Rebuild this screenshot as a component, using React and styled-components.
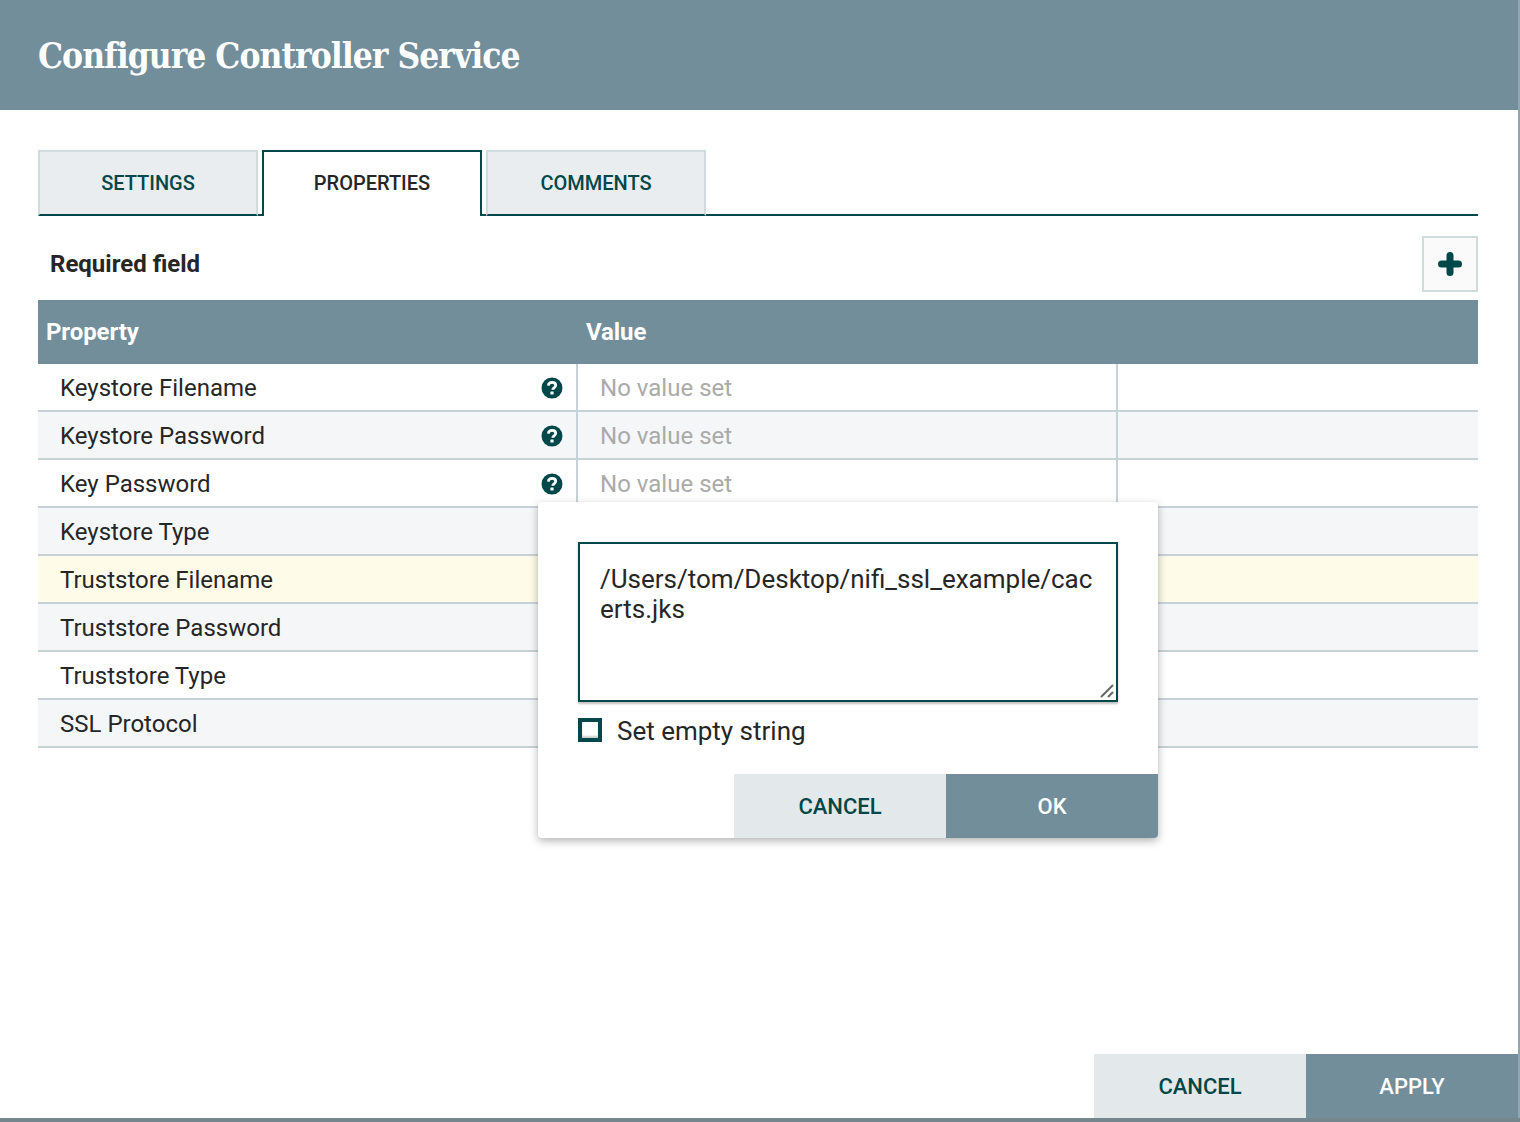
import styled, { createGlobalStyle } from "styled-components";

const GlobalStyle = createGlobalStyle`
  html, body {
    margin: 0;
    padding: 0;
    height: 100%;
    background: #92a5af;
    font-family: Roboto, "Liberation Sans", sans-serif;
    overflow: hidden;
  }
`;

// Dialog shell
const Dialog = styled.div`
  position: relative;
  width: 1518px;
  height: 1118px;
  background: #fff;
  display: flex;
  flex-direction: column;
`;

const BottomStrip = styled.div`
  height: 4px;
  background: #75868e;
`;

const Header = styled.div`
  height: 110px;
  flex: none;
  background: #728e9b;
  display: flex;
  align-items: center;
  padding-left: 38px;
  color: #fff;
  font-family: "DejaVu Serif Condensed", "DejaVu Serif", serif;
  font-size: 35px;
  font-weight: 700;
  letter-spacing: -0.96px;
`;

const Body = styled.div`
  flex: 1;
  padding: 40px 40px 0 38px;
  display: flex;
  flex-direction: column;
`;

// Tabs
const TabBar = styled.div`
  display: flex;
  gap: 4px;
  height: 66px;
  flex: none;
  border-bottom: 2px solid #004849;
  box-sizing: border-box;
`;

const Tab = styled.div`
  width: 220px;
  height: 66px;
  box-sizing: border-box;
  display: flex;
  align-items: center;
  justify-content: center;
  font-size: 20px;
  font-weight: 500;
  background: ${(props) => (props.$active ? "#fff" : "#e9edf0")};
  color: ${(props) => (props.$active ? "#262626" : "#004849")};
  border: 2px solid ${(props) => (props.$active ? "#004849" : "#cfdbdd")};
  border-bottom: ${(props) => (props.$active ? "none" : "2px solid #004849")};
  padding-bottom: ${(props) => (props.$active ? "2px" : "0")};
`;

const Toolbar = styled.div`
  height: 84px;
  flex: none;
  display: flex;
  align-items: center;
  justify-content: space-between;
  padding: 12px 0 0 12px;
  box-sizing: border-box;
`;

const RequiredLabel = styled.div`
  font-size: 24px;
  font-weight: 700;
  color: #262626;
`;

const AddButton = styled.div`
  width: 56px;
  height: 56px;
  box-sizing: border-box;
  background: #fafafa;
  border: 2px solid #cfdbdd;
  display: flex;
  align-items: center;
  justify-content: center;
`;

// Table
const TableHead = styled.div`
  height: 64px;
  background: #728e9b;
  display: grid;
  grid-template-columns: 540px 1fr;
  align-items: center;
  color: #fff;
  font-size: 24px;
  font-weight: 700;
  letter-spacing: -0.1px;
`;

const HeadCell = styled.div`
  padding-left: 8px;
`;

const Row = styled.div`
  height: 48px;
  box-sizing: border-box;
  display: grid;
  grid-template-columns: 538px 542px 1fr;
  border-bottom: 2px solid #c7d2d7;
  background: ${(props) =>
    props.$highlight ? "#fffbe9" : props.$odd ? "#f4f6f7" : "#fff"};
`;

const NameCell = styled.div`
  display: flex;
  align-items: center;
  justify-content: space-between;
  padding: 2px 13px 0 22px;
  font-size: 24px;
  color: #262626;
`;

const ValueCell = styled.div`
  display: flex;
  align-items: center;
  padding: 2px 0 0 22px;
  font-size: 24px;
  color: #aaa;
  letter-spacing: 0.02px;
  border-left: 2px solid #c7d2d7;
  border-right: 2px solid #c7d2d7;
`;

// Value editor popup
const Editor = styled.div`
  position: absolute;
  left: 538px;
  top: 502px;
  width: 620px;
  height: 336px;
  box-sizing: border-box;
  background: #fff;
  border-radius: 4px;
  box-shadow: 0 3px 8px rgba(0, 0, 0, 0.3);
  padding: 40px 40px 0;
  display: flex;
  flex-direction: column;
`;

const ValueBox = styled.div`
  position: relative;
  width: 540px;
  height: 160px;
  flex: none;
  box-sizing: border-box;
  border: 2px solid #004849;
  box-shadow: 0 2px 2px rgba(0, 0, 0, 0.25);
  padding: 20px 20px 0;
  font-size: 26px;
  line-height: 30px;
  color: #262626;
  word-break: break-all;
`;

const Grip = styled.svg`
  position: absolute;
  right: 1px;
  bottom: 1px;
`;

const EmptyRow = styled.div`
  display: flex;
  align-items: center;
  gap: 15px;
  margin-top: 14px;
  font-size: 26px;
  color: #262626;
`;

const CheckBox = styled.div`
  width: 24px;
  height: 24px;
  margin-top: -2px;
  box-sizing: border-box;
  border: 4px solid #004849;
  background: #fff;
  box-shadow: inset 0 -2px 2px rgba(0, 0, 0, 0.2);
`;

const Actions = styled.div`
  margin: auto -40px 0 0;
  display: flex;
  justify-content: flex-end;
  border-bottom-right-radius: 4px;
  overflow: hidden;
`;

const Footer = styled.div`
  flex: none;
  display: flex;
  justify-content: flex-end;
`;

const ActionButton = styled.div`
  width: 212px;
  height: 64px;
  display: flex;
  align-items: center;
  justify-content: center;
  font-size: 22px;
  font-weight: 500;
  background: ${(props) => (props.$primary ? "#728e9b" : "#e3e8eb")};
  color: ${(props) => (props.$primary ? "#fff" : "#004849")};
`;

const rows = [
  { name: "Keystore Filename", help: true },
  { name: "Keystore Password", help: true },
  { name: "Key Password", help: true },
  { name: "Keystore Type" },
  { name: "Truststore Filename", highlight: true },
  { name: "Truststore Password" },
  { name: "Truststore Type" },
  { name: "SSL Protocol" },
];

const HelpIcon = () => (
  <svg width="22" height="22" viewBox="0 0 22 22">
    <circle cx="11" cy="11" r="10.5" fill="#004849" />
    <path
      d="M7.4 8.6c.1-2.1 1.6-3.3 3.7-3.3s3.6 1.2 3.6 3c0 1.3-.7 2-1.8 2.7-.9.5-1.1.9-1.1 1.7"
      fill="none"
      stroke="#fff"
      strokeWidth="2.8"
    />
    <rect x="9.4" y="14.6" width="3.2" height="3" rx="0.4" fill="#fff" />
  </svg>
);

const App = () => (
  <>
    <GlobalStyle />
    <Dialog>
      <Header>Configure Controller Service</Header>
      <Body>
        <TabBar>
          <Tab>SETTINGS</Tab>
          <Tab $active>PROPERTIES</Tab>
          <Tab>COMMENTS</Tab>
        </TabBar>
        <Toolbar>
          <RequiredLabel>Required field</RequiredLabel>
          <AddButton>
            <svg width="26" height="26" viewBox="0 0 26 26">
              <path
                d="M13 4.5v17M4.5 13h17"
                stroke="#004849"
                strokeWidth="7"
                strokeLinecap="round"
              />
            </svg>
          </AddButton>
        </Toolbar>
        <TableHead>
          <HeadCell>Property</HeadCell>
          <HeadCell>Value</HeadCell>
        </TableHead>
        {rows.map((row, i) => (
          <Row key={row.name} $odd={i % 2 === 1} $highlight={row.highlight}>
            <NameCell>
              {row.name}
              {row.help && <HelpIcon />}
            </NameCell>
            {row.help && <ValueCell>No value set</ValueCell>}
          </Row>
        ))}
      </Body>
      <Editor>
        <ValueBox>
          /Users/tom/Desktop/nifi_ssl_example/cacerts.jks
          <Grip width="16" height="16" viewBox="0 0 16 16">
            <path d="M2 14L14 2M9 14l5-5" stroke="#666" strokeWidth="2" />
          </Grip>
        </ValueBox>
        <EmptyRow>
          <CheckBox />
          Set empty string
        </EmptyRow>
        <Actions>
          <ActionButton>CANCEL</ActionButton>
          <ActionButton $primary>OK</ActionButton>
        </Actions>
      </Editor>
      <Footer>
        <ActionButton>CANCEL</ActionButton>
        <ActionButton $primary>APPLY</ActionButton>
      </Footer>
    </Dialog>
    <BottomStrip />
  </>
);

export default App;
